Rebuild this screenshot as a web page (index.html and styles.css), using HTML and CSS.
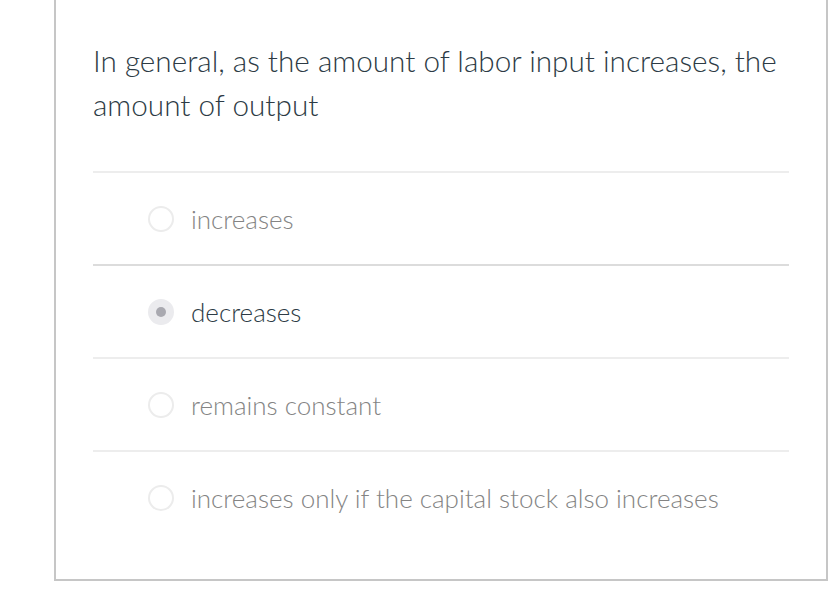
FILE: index.html
```html
<!DOCTYPE html>
<html>
<head>
<meta charset="utf-8">
<link rel="stylesheet" href="styles.css">
</head>
<body>
<div class="card">
  <div class="question">In general, as the amount of labor input increases, the amount of output</div>
  <ul class="answers">
    <li class="answer"><span class="radio"></span><span class="label">increases</span></li>
    <li class="answer selected"><span class="radio"></span><span class="label">decreases</span></li>
    <li class="answer"><span class="radio"></span><span class="label">remains constant</span></li>
    <li class="answer"><span class="radio"></span><span class="label">increases only if the capital stock also increases</span></li>
  </ul>
</div>
</body>
</html>
```
FILE: styles.css
```css
html, body {
  margin: 0;
  padding: 0;
  background: #fff;
}
body {
  font-family: Lato, "Liberation Sans", sans-serif;
  padding-left: 54px;
}
.card {
  border: 2px solid #c6c6c6;
  border-top: none;
  padding: 39px 37px 34px 37px;
  box-sizing: border-box;
  height: 581px;
}
.question {
  font-size: 29.7px;
  line-height: 44px;
  color: #2d3b45;
  font-weight: 300;
}
.answers {
  list-style: none;
  margin: 44px 0 0 0;
  padding: 0;
}
.answer {
  border-top: 2px solid #ededed;
  height: 93px;
  box-sizing: border-box;
  display: flex;
  align-items: center;
  padding-left: 55px;
  gap: 17px;
  color: #848484;
  font-size: 26px;
  font-weight: 300;
}
.answer.selected {
  color: #2d3b45;
}
.answers .answer:nth-child(2) {
  border-top-color: #dcdcdc;
}
.radio {
  width: 26px;
  height: 26px;
  box-sizing: border-box;
  border: 2px solid #ececec;
  border-radius: 50%;
  flex: none;
  display: flex;
  align-items: center;
  justify-content: center;
}
.selected .radio {
  background: #ebebee;
  border-color: #ebebee;
}
.selected .radio::after {
  content: "";
  width: 10px;
  height: 10px;
  border-radius: 50%;
  background: #a9a9b0;
}
.label {
  line-height: 30px;
}
```
